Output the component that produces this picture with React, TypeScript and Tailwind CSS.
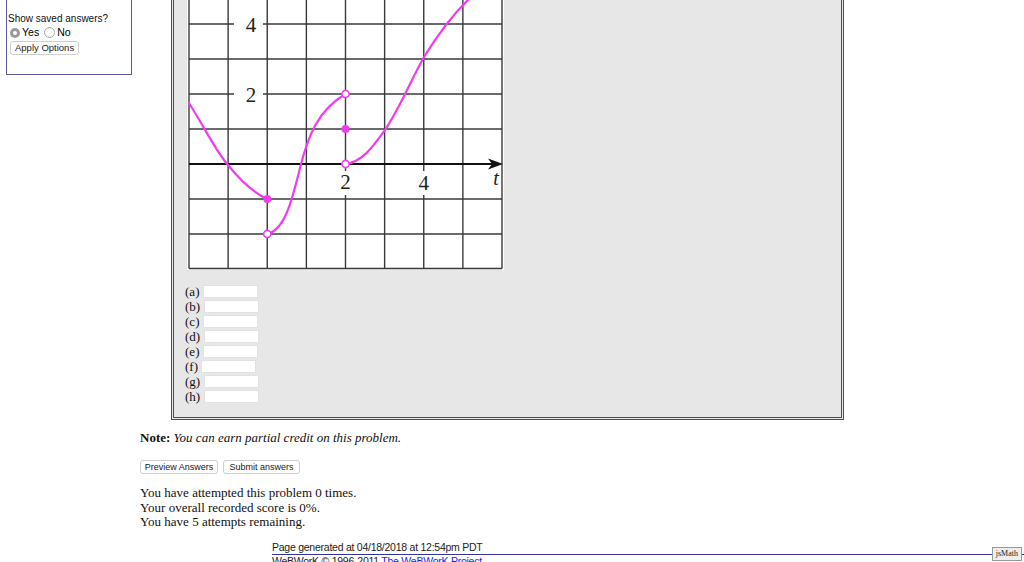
import React from 'react';

const SANS = { fontFamily: '"Liberation Sans", Arial, sans-serif' };
const SERIF = { fontFamily: '"Liberation Serif", "Times New Roman", serif' };

const MAGENTA = '#f03cf0';

// grid in page coordinates (svg is translated by -186)
const XS = Array.from({ length: 9 }, (_, i) => 189 + 39.125 * i);
const YS = [24, 59, 94, 129, 164, 199, 234, 268.5];

const Graph: React.FC = () => (
  <svg width={319} height={271} className="block" viewBox="186 0 319 271">
    <rect x={187} y={0} width={317} height={270} fill="#fff" />
    {/* grid */}
    {XS.map((x) => (
      <line key={`v${x}`} x1={x} y1={0} x2={x} y2={268.5} stroke="#3a3a3a" strokeWidth={1.4} />
    ))}
    {YS.map((y) =>
      y === 164 ? null : (
        <line key={`h${y}`} x1={189} y1={y} x2={502} y2={y} stroke="#3a3a3a" strokeWidth={1.4} />
      ),
    )}
    {/* x axis */}
    <line x1={189} y1={164} x2={494} y2={164} stroke="#111" strokeWidth={2.2} />
    <polygon points="503,164 488,158.5 492,164 488,169.5" fill="#111" />

    {/* label backgrounds */}
    <rect x={234} y={13} width={29} height={22} fill="#fff" />
    <rect x={234} y={83} width={29} height={22} fill="#fff" />
    <rect x={336} y={171} width={19} height={24} fill="#fff" />
    <rect x={414} y={171} width={19} height={24} fill="#fff" />

    <g style={SERIF} fontSize={21} fill="#222" textAnchor="middle">
      <text x={251} y={31.5}>4</text>
      <text x={251} y={101.5}>2</text>
      <text x={345.5} y={189}>2</text>
      <text x={423.8} y={189.5}>4</text>
      <text x={496} y={185} fontStyle="italic" fontSize={20}>t</text>
    </g>

    {/* curves */}
    <g fill="none" stroke={MAGENTA} strokeWidth={2.2} strokeLinecap="round">
      <path d="M189,103 C205,128 215,150 228,165 C240,180 252,192 267.25,199" />
      <path d="M267.25,234 C285,230 292,200 300,168 C308,136 318,110 345.5,94" />
      <path d="M345.5,164 C362,162 372,148 385,130 C400,108 412,78 424,57 C437,36 452,15 470,-2" />
    </g>

    {/* points */}
    <circle cx={267.25} cy={199} r={4} fill={MAGENTA} />
    <circle cx={267.25} cy={234} r={3.6} fill="#fff" stroke={MAGENTA} strokeWidth={1.6} />
    <circle cx={345.5} cy={94} r={3.6} fill="#fff" stroke={MAGENTA} strokeWidth={1.6} />
    <circle cx={345.5} cy={129} r={4} fill={MAGENTA} />
    <circle cx={345.5} cy={164} r={3.6} fill="#fff" stroke={MAGENTA} strokeWidth={1.6} />
  </svg>
);

const PARTS = ['a', 'b', 'c', 'd', 'e', 'f', 'g', 'h'];

export default function App() {
  return (
    <div className="relative w-[1024px] h-[562px] overflow-hidden bg-white text-black">
      <div className="flex">
        {/* Options column */}
        <div className="w-[140px] shrink-0 pl-[6px]">
          <div className="w-[126px] h-[75px] border-x border-b border-[#5d5a9c] pl-[1px] pt-[12px]" style={SANS}>
            <p className="text-[10px] leading-[13px] text-[#111]">Show saved answers?</p>
            <div className="flex items-center h-[13px] mt-[1px] pl-[2px] text-[10.5px] leading-[13px]">
              <span className="w-[10px] h-[10px] rounded-full bg-[#9a9a9a] flex items-center justify-center">
                <span className="w-[4px] h-[4px] rounded-full bg-white" />
              </span>
              <span className="ml-[2px]">Yes</span>
              <span className="ml-[5px] w-[11px] h-[11px] rounded-full border border-[#a8a8a8] bg-white" />
              <span className="ml-[2px]">No</span>
            </div>
            <button className="block mt-[2px] ml-[2px] h-[14px] px-[4px] whitespace-nowrap text-[9.5px] leading-[12px] text-[#222] bg-white border border-[#cfcfcf] rounded-[3px]">
              Apply Options
            </button>
          </div>
        </div>

        {/* Main column */}
        <div className="flex-1 min-w-0">
          <div className="ml-[31px] w-[673px] border-x-[3px] border-b-[3px] border-double border-[#505050] bg-[#e7e7e7] pl-[12px] pb-[13px]">
            <Graph />
            <div className="mt-[13px]" style={SERIF}>
              {PARTS.map((p) => (
                <div key={p} className="flex items-center h-[15px] text-[13px] text-[#111]">
                  <span className="-ml-[1px]">({p})</span>
                  <span className={`${p === 'f' ? 'ml-[3px]' : 'ml-[4px]'} w-[55px] h-[13px] bg-white border border-[#e2e2e2]`} />
                </div>
              ))}
            </div>
          </div>

          <p className="mt-[10px] text-[13px] leading-[16px] text-[#111]" style={SERIF}>
            <b>Note:</b> <i>You can earn partial credit on this problem.</i>
          </p>

          <div className="mt-[14px] flex gap-[5px]" style={SANS}>
            <button className="h-[14px] w-[78px] p-0 whitespace-nowrap text-[9px] leading-[12px] text-[#222] bg-white border border-[#d0d0d0] rounded-[3px]">
              Preview Answers
            </button>
            <button className="h-[14px] w-[77px] p-0 whitespace-nowrap text-[9px] leading-[12px] text-[#222] bg-white border border-[#d0d0d0] rounded-[3px]">
              Submit answers
            </button>
          </div>

          <div className="mt-[12px] text-[13px] leading-[14.5px] text-[#111]" style={SERIF}>
            <p>You have attempted this problem 0 times.</p>
            <p>Your overall recorded score is 0%.</p>
            <p>You have 5 attempts remaining.</p>
          </div>

          <div className="mt-[11px] ml-[132px] text-[10.5px] leading-[12px] tracking-[-0.25px] text-[#222]" style={SANS}>
            <p className="pb-[1px] border-b border-[#33339a]">Page generated at 04/18/2018 at 12:54pm PDT</p>
            <p>
              WeBWorK © 1996-2011 <span className="text-[#1a1aee]">The WeBWorK Project</span>
            </p>
          </div>
        </div>
      </div>

      {/* jsMath button */}
      <div
        className="absolute right-[2px] top-[547px] h-[14px] px-[3px] bg-[#eeeeee] border border-[#999] text-[8px] leading-[12px] text-[#222]"
        style={SERIF}
      >
        jsMath
      </div>
    </div>
  );
}
